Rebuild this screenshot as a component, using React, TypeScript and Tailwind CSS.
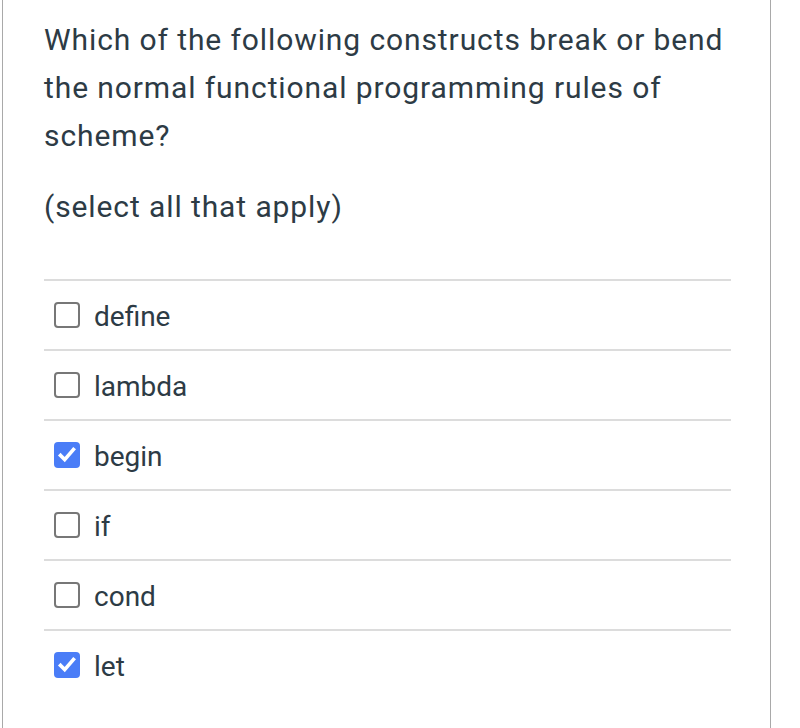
import { useState } from "react";

const options = [
  { label: "define", checked: false },
  { label: "lambda", checked: false },
  { label: "begin", checked: true },
  { label: "if", checked: false },
  { label: "cond", checked: false },
  { label: "let", checked: true },
];

function Box({ checked }: { checked: boolean }) {
  if (checked) {
    return (
      <span className="flex h-[26px] w-[26px] shrink-0 items-center justify-center rounded-[4px] bg-[#4a7df7]">
        <svg viewBox="0 0 24 24" className="h-[22px] w-[22px]" fill="none" stroke="white" strokeWidth={4} strokeLinecap="square">
          <path d="M5 12.5l4.5 4.5L19 6" />
        </svg>
      </span>
    );
  }
  return <span className="h-[26px] w-[26px] shrink-0 rounded-[4px] border-2 border-[#777777] bg-white" />;
}

export default function App() {
  const [items, setItems] = useState(options);

  return (
    <div className="h-[728px] w-[800px] bg-white font-['Roboto',sans-serif] text-[#2d3b45]">
      <div className="ml-[2px] h-full w-[769px] border-x border-[#a9a9a9] pl-[41px] pr-[39px] pt-[16px]">
        <p className="text-[30px] leading-[48px] tracking-[0.9px]">
          Which of the following constructs break or bend the normal functional programming rules of scheme?
        </p>
        <p className="mt-[23px] text-[30px] leading-[48px] tracking-[0.9px]">(select all that apply)</p>

        <div className="mt-[48px]">
          {items.map((o, i) => (
            <div key={o.label} className="border-t-2 border-[#dcdcdc]">
              <label
                className="flex h-[68px] cursor-pointer items-center gap-[14px] pl-[10px]"
                onClick={() =>
                  setItems(items.map((x, j) => (j === i ? { ...x, checked: !x.checked } : x)))
                }
              >
                <Box checked={o.checked} />
                <span className="mt-[4px] text-[28px] leading-none">{o.label}</span>
              </label>
            </div>
          ))}
        </div>
      </div>
    </div>
  );
}
